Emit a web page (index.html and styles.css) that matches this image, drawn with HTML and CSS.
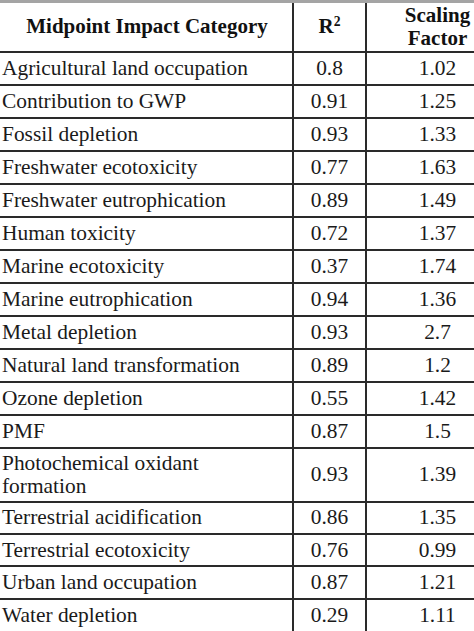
FILE: index.html
```html
<!DOCTYPE html>
<html>
<head>
<meta charset="utf-8">
<link rel="stylesheet" href="styles.css">
</head>
<body>
<table class="impact">
  <colgroup>
    <col class="c-name">
    <col class="c-r2">
    <col class="c-sf">
  </colgroup>
  <thead>
    <tr class="head">
      <th class="name">Midpoint Impact Category</th>
      <th>R<sup>2</sup></th>
      <th class="sf">Scaling<br>Factor</th>
    </tr>
  </thead>
  <tbody>
    <tr><td class="name">Agricultural land occupation</td><td>0.8</td><td class="sf">1.02</td></tr>
    <tr><td class="name">Contribution to GWP</td><td>0.91</td><td class="sf">1.25</td></tr>
    <tr><td class="name">Fossil depletion</td><td>0.93</td><td class="sf">1.33</td></tr>
    <tr><td class="name">Freshwater ecotoxicity</td><td>0.77</td><td class="sf">1.63</td></tr>
    <tr><td class="name">Freshwater eutrophication</td><td>0.89</td><td class="sf">1.49</td></tr>
    <tr><td class="name">Human toxicity</td><td>0.72</td><td class="sf">1.37</td></tr>
    <tr><td class="name">Marine ecotoxicity</td><td>0.37</td><td class="sf">1.74</td></tr>
    <tr><td class="name">Marine eutrophication</td><td>0.94</td><td class="sf">1.36</td></tr>
    <tr><td class="name">Metal depletion</td><td>0.93</td><td class="sf">2.7</td></tr>
    <tr><td class="name">Natural land transformation</td><td>0.89</td><td class="sf">1.2</td></tr>
    <tr><td class="name">Ozone depletion</td><td>0.55</td><td class="sf">1.42</td></tr>
    <tr><td class="name">PMF</td><td>0.87</td><td class="sf">1.5</td></tr>
    <tr class="double"><td class="name">Photochemical oxidant<br>formation</td><td>0.93</td><td class="sf">1.39</td></tr>
    <tr><td class="name">Terrestrial acidification</td><td>0.86</td><td class="sf">1.35</td></tr>
    <tr><td class="name">Terrestrial ecotoxicity</td><td>0.76</td><td class="sf">0.99</td></tr>
    <tr><td class="name">Urban land occupation</td><td>0.87</td><td class="sf">1.21</td></tr>
    <tr class="last"><td class="name">Water depletion</td><td>0.29</td><td class="sf">1.11</td></tr>
  </tbody>
</table>
</body>
</html>
```
FILE: styles.css
```css
html, body {
  margin: 0;
  padding: 0;
  background: #ffffff;
}

.impact {
  border-collapse: collapse;
  table-layout: fixed;
  width: 474px;
  font-family: "Liberation Serif", "DejaVu Serif", serif;
  font-weight: 400;
  font-size: 21.4px;
  color: #1a1a1a;
}

.c-name { width: 293px; }
.c-r2 { width: 73px; }
.c-sf { width: 108px; }

.impact th,
.impact td {
  border: 2px solid #2a2a2a;
  padding: 0;
  text-align: center;
  vertical-align: middle;
  line-height: 23px;
}

.impact th.name,
.impact td.name {
  text-align: left;
  padding-left: 2px;
  border-left: none;
}

.impact th.name {
  text-align: center;
}

.impact th.sf,
.impact td.sf {
  border-right: none;
  padding-left: 34px;
}

.impact thead th {
  border-top: 3px solid #a4a4a4;
  font-weight: 700;
  font-size: 21px;
  color: #111;
}

.impact thead th sup {
  font-size: 0.65em;
  line-height: 0;
  vertical-align: 0.55em;
}

.head { height: 50px; }

.impact tbody tr { height: 33px; }
.impact tbody tr.double { height: 54px; }
.impact tbody tr:nth-child(n+14) { height: 32.4px; }
.impact tbody tr.last { height: 34px; }
.impact tbody tr.last td {
  border-bottom: none;
  vertical-align: top;
  padding-top: 4px;
}
```
